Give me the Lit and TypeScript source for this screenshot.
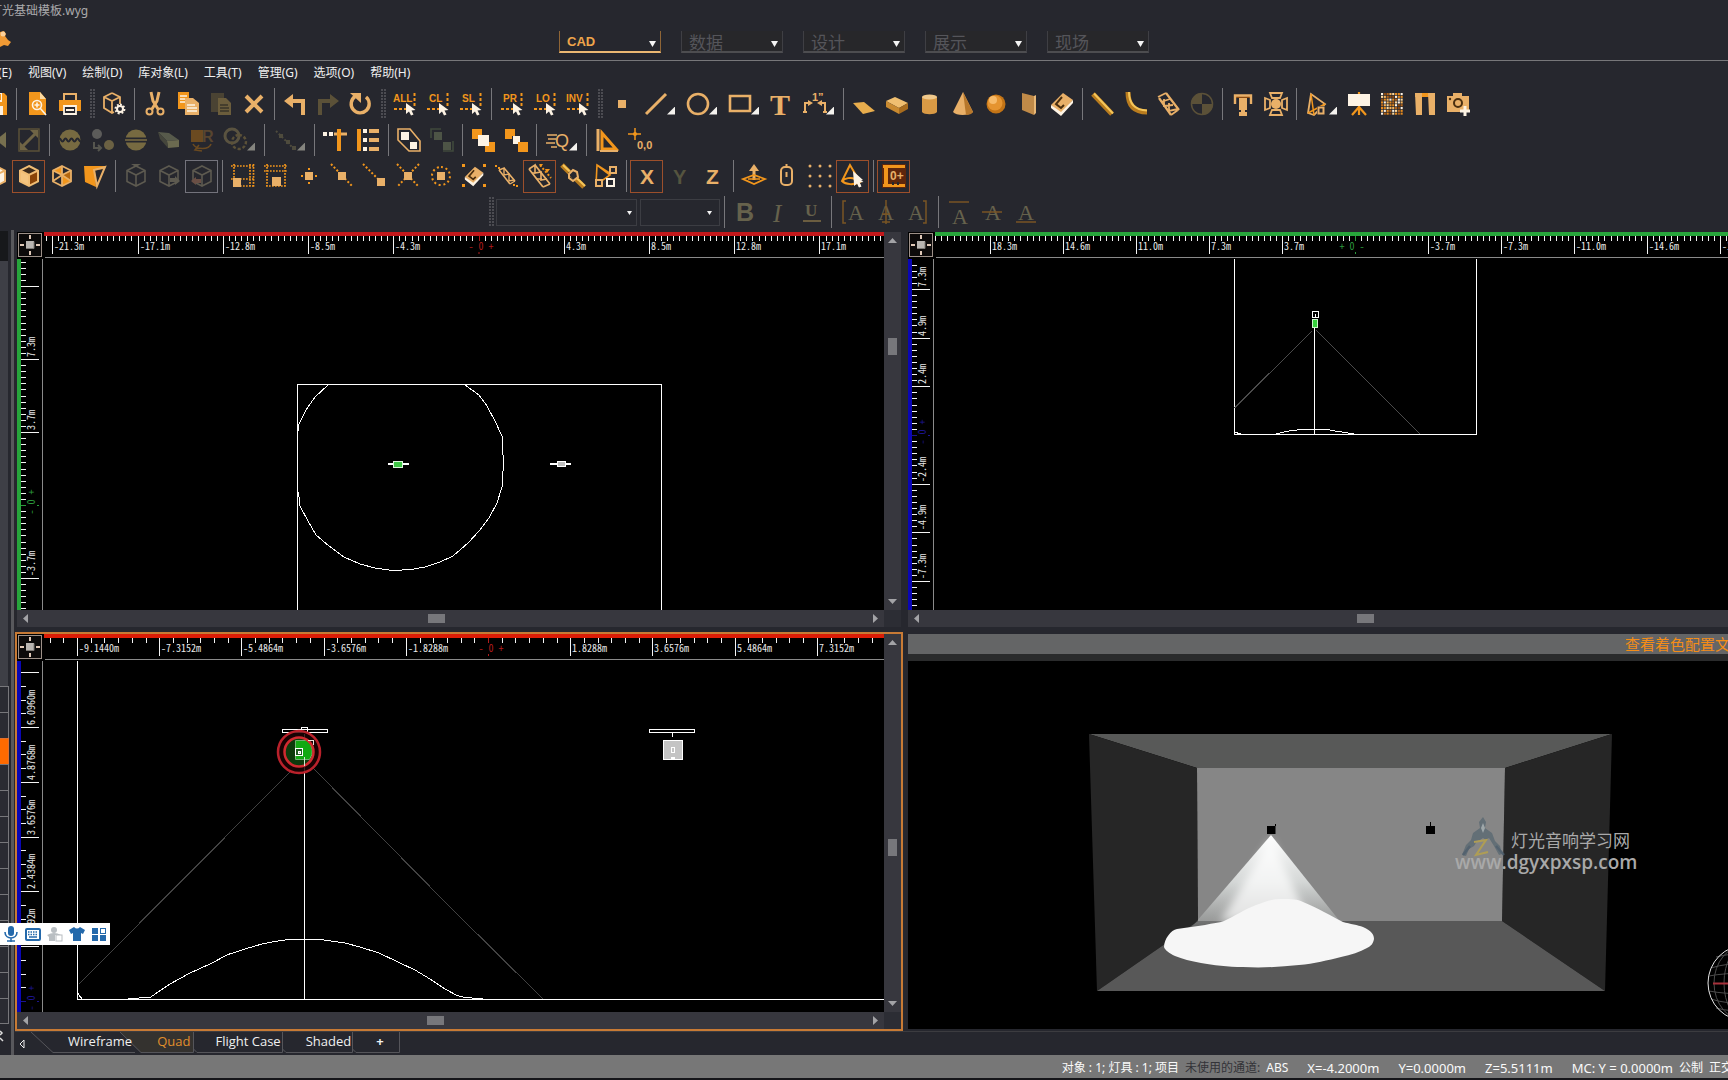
import { LitElement, html, svg, css, nothing } from "lit";
import { customElement, property } from "lit/decorators.js";
import { classMap } from "lit/directives/class-map.js";
import { styleMap } from "lit/directives/style-map.js";

/* ---------- icon drawing helpers (24 x 24 grid) ---------- */
const O = "#f2961c";
const L = "#e9b068";
const W = "#fdf3e4";
const D = "#5b5138";
const G = "#5d5a50";

const F = (d: string, c: string = L) => svg`<path d=${d} fill=${c}></path>`;
const S = (d: string, c: string = L, w: number = 2) =>
  svg`<path d=${d} fill="none" stroke=${c} stroke-width=${w}></path>`;
const DS = (d: string, c: string = O, w: number = 2, dash: string = "2 2") =>
  svg`<path d=${d} fill="none" stroke=${c} stroke-width=${w} stroke-dasharray=${dash}></path>`;
const C = (x: number, y: number, r: number, c: string = L, w: number = 0) =>
  w
    ? svg`<circle cx=${x} cy=${y} r=${r} fill="none" stroke=${c} stroke-width=${w}></circle>`
    : svg`<circle cx=${x} cy=${y} r=${r} fill=${c}></circle>`;
const T = (x: number, y: number, t: string, size: number, c: string, cls = "gb") =>
  svg`<text x=${x} y=${y} font-size=${size} fill=${c} class=${cls}>${t}</text>`;

const CURSOR = "M13 11l0 11 3-2.500 2 4 2.500-1-2-4 4-.5z";
const pick = (t: string) => [
  T(0, 10, t, 10, O),
  DS("M21.500 1v15", O, 2, "3 2"),
  DS("M1 17h13", O, 2, "3 2"),
  F(CURSOR, W),
];
const cube = (c: string, w = 2) => S("M12 2l9 4.500v11L12 22l-9-4.500v-11zM3 6.500l9 4.500 9-4.500M12 11v11", c, w);
const letterL = [
  F("M1 13L13 1l10 7-12 14z", L),
  F("M1 13l10 7 12-12v3L11 24 1 16z", W),
  S("M12 5l-6 7 5 4 3-3", "#4a2f10", 2),
];
const serifA = (x = 4) => T(x, 20, "A", 22, "#66624c", "gs");
const LED_TONES = [W, "#e58a1e", "#f7b55c", "#8c4a10", "#e58a1e", "#fbd9a0", "#b5651a"];
const ledDots = Array.from({ length: 64 }, (_, i) => {
  const x = i % 8;
  const y = Math.floor(i / 8);
  const tone = LED_TONES[(x * 3 + y * 5 + ((x * y) % 4)) % LED_TONES.length];
  return svg`<rect x=${1 + x * 2.8} y=${1 + y * 2.8} width="2.100" height="2.100" fill=${tone}></rect>`;
});

const ICONS: Record<string, unknown> = {
  save: [F("M1 1h19l3 3v19H1z", O), F("M4 1h14v9H4z", W), F("M4 14h15v9H4z", W), F("M14 2h3v6h-3z", O)],
  preview: [F("M4 0h11l6 7v16H4z", O), F("M15 0l6 7h-6z", "#fbd9a0"), C(12, 13, 4.5, W, 1.6), S("M12 10.500v5M9.500 13h5M15 16l6 7", W, 1.6)],
  print: [S("M6 9V2h12v7", L, 2), F("M1 8h22v11h-5v-4H6v4H1z", O), S("M6 14h12v8H6zM8 18h8", W, 1.8)],
  cubeGear: [S("M10 1l8 4v7M10 1L2 5v11l8 5 2-1M2 5l8 4 8-4M10 9v12", L, 1.8), C(18, 17, 3, W, 2), DS("M18 12.500a4.500 4.500 0 1 1-.1 0", W, 2, "1.800 1.700")],
  cut: [S("M8 0l2 9 5 8M16 0l-2 9-5 8", L, 3), C(6.5, 19.5, 3, L, 2), C(17.5, 19.5, 3, L, 2)],
  copy: [F("M2 0h11v17H2z", O), S("M4 4h7M4 7h6M4 10h5", W, 1.4), F("M9 6h8l6 5v12H9z", L), S("M11 13h8M11 16h10M11 19h10", W, 1.5)],
  paste: [F("M2 1h13v19H2z", "#4a4333"), F("M9 6h8l5 5v12H9z", "#6b5d3c"), S("M11 13h8M11 16h9M11 19h9", "#3a3528", 1.5)],
  remove: [S("M4 4l16 16M20 4L4 20", L, 4)],
  undo: [F("M1 9l9-7v5h12v16h-4V11h-8v5z", L)],
  redo: [F("M23 9l-9-7v5H2v16h4V11h8v5z", D)],
  refresh: [S("M17 5a9 9 0 1 1-11-.5", L, 3.4), F("M1 1h11v10z", L)],
  selAll: pick("ALL"),
  selClass: [T(3, 10, "CL", 10, O), ...pick("").slice(1)],
  selSymbol: [T(3, 10, "SL", 10, O), ...pick("").slice(1)],
  selProp: [T(3, 10, "PR", 10, O), ...pick("").slice(1)],
  selLocal: [T(3, 10, "LO", 10, O), ...pick("").slice(1)],
  selInvert: pick("INV"),
  point: [F("M8 8h8v8H8z", L)],
  line: [S("M2 22L22 2", L, 3)],
  circle: [C(12, 12, 10, L, 2.6)],
  rect: [S("M2 4h20v15H2z", L, 2.6)],
  text: [T(1, 23, "T", 30, L, "gsb")],
  dim: [T(9, 9, "1”", 11, L), S("M2 21v-10h6M22 21v-10h-6M0 20h4M20 20h4", L, 2), F("M5 8l5 3-5 3zM19 8l-5 3 5 3z", L)],
  plane: [F("M1 11l11-1 11 9-12 3z", "#e8ad4d")],
  box: [F("M1 9l9-4 13 6-9 5z", "#f0bf70"), F("M1 9v6l13 7v-6z", "#c98a30"), F("M14 16l9-5v6l-9 5z", "#a86c1e")],
  cylinder: [F("M4 5v15c2 3 13 3 15 0V5z", "#d99a45"), svg`<ellipse cx="11.500" cy="5" rx="7.500" ry="2.600" fill="#f0c98c"></ellipse>`],
  cone: [F("M12 0L2 20c3 4 16 4 20 0z", L), F("M12 0l3 23c3 0 6-1 7-3z", "#b8782c")],
  sphere: [C(12, 12, 9.5, "#c37416"), C(11, 11, 7.5, "#e59430"), C(9, 8, 4, "#f7bb6a")],
  slab: [F("M5 1l12 3v19L5 18z", "#c08a48"), F("M17 4l2-1v18l-2 2z", "#e8b878")],
  letter: letterL,
  pipe: [S("M2 2l19 20", "#b97c1e", 5), S("M3 1.500l19 20", "#f5c65a", 2)],
  bend: [S("M4 0c0 13 6 20 19 20", "#b97c1e", 5), S("M5 0c0 12 6 18 18 18.500", "#f5c65a", 2)],
  truss: [S("M2 6l12 17M9 1l13 17", L, 2.2), S("M1 5l8-4M4 10l9-3M7 7v7l9-1M12 11v8l9-2M14 23l7-5", L, 1.8)],
  target: [C(12, 12, 10.5, D, 1.5), F("M12 1a11 11 0 0 0-11 11h11zM12 23a11 11 0 0 0 11-11H12z", D)],
  par: [F("M5 3h14v3H5z", "#8a4a10"), S("M4 12V3.500h16V12", L, 2.4), F("M8 6h8v12H8z", L), F("M10 18h4v2h2v4H8v-4h2z", L)],
  moving: [C(12, 12, 5, L), S("M6 1h12l-2 5H8zM6 23h12l-2-5H8zM1 6v12l5-2V8zM23 6v12l-5-2V8z", L, 1.8)],
  lightTool: [S("M5 2L2 21l6 2 11-11z", L, 1.8), S("M5 2l3 21M2 21l17-9", O, 1.5), F("M11 14h8v9h-8z", "#26272e"), S("M12.500 15.500h5v6h-5z", L, 2)],
  screen: [F("M1 2h22v12H1z", W), S("M12 0v2M12 14v9M12 15l-7 8M12 15l7 8", O, 2.2)],
  ledWall: [ledDots],
  curtain: [F("M2 1h20v4H2z", O), F("M2 1h7v22H3zM15 1h7v22h-6z", L)],
  camera: [F("M1 4h6V1h9v3h7v16H1z", L), C(12, 11, 4, "#4a2f10", 2), C(4, 7, 1.2, "#4a2f10"), S("M19 14v10M14 19h10", W, 3)],

  mirrorH: [F("M2 4l10 8-10 8z", D), F("M22 4l-10 8 10 8z", "#77704f")],
  scale: [S("M2 1h20v22H2z", D, 1.5), S("M6 18L18 6", "#6f6445", 3), F("M21 2v8l-8-8zM3 22v-8l8 8z", "#6f6445")],
  wave: [C(12, 12, 10.5, "#776a41"), S("M0 12q1.500-3 3 0t3 0 3 0 3 0 3 0 3 0 3 0 3 0", "#26272e", 2)],
  array: [C(6, 6, 5, "#5c5c5a"), C(18, 17, 5, "#6b6143"), S("M3 14v6h7M7 17l3 3-3 3", "#56564f", 2)],
  splitC: [C(12, 12, 10.5, "#776a41"), S("M1 12h22", "#26272e", 5), S("M1 12h22", "#776a41", 1.6)],
  extrude: [F("M1 4l9 9 12-1-10-7z", "#575a4b"), F("M10 13l12-1v7l-11 1z", "#6b6a50"), F("M1 4l9 9 1 7-8-9z", "#45463c")],
  rotate: [F("M1 2h12v12H1z", "#6b4a20"), T(12, 14, "R", 16, "#58452f"), S("M3 16c3 6 16 6 18 0M9 17l-4 5 7 1", "#6b4a20", 1.6)],
  boolean: [C(8, 8, 7, "#5a5340", 3), DS("M15 7a7 7 0 1 1-.1 0", D, 2.4, "3 2")],
  pathDots: [DS("M2 3l18 18", "#4e4b3d", 2, "2 2"), F("M5 6h4v4H5zM12 12h4v4h-4zM18 18h4v4h-4z", "#4e4b3d")],
  alignT: [F("M0 4h4v4H0zM6 4h4v4H6z", W), S("M11 6h13", L, 3), S("M16 1v22", O, 4)],
  alignList: [F("M1 1h4v22H1z", O), F("M7 1h4v4H7zM7 10h4v4H7zM7 19h4v4H7z", W), F("M13 1h10v4H13zM13 10h10v4H13zM13 19h10v4H13z", L)],
  group: [S("M1 1h12l10 12v10H12L1 12z", L, 1.6), F("M4 4h8v8H4zM13 14h7v7h-7z", W)],
  ungroup: [S("M1 10V1h10M23 13v10H13", "#404a3c", 1.6), F("M4 4h8v8H4zM13 14h8v8h-8z", "#4d5446")],
  front: [F("M1 1h10v10H1zM14 14h10v10H14z", O), F("M7 7h11v11H7z", W)],
  back: [F("M1 1h10v10H1zM14 14h10v10H14z", O), F("M8 8h8v8H8z", "#26272e"), F("M9 8h7v8H9z", W), F("M14 14h10v10H14z", O)],
  quick: [T(9, 19, "Q", 18, L, "gn"), S("M1 7h10M2 11h8M0 15h9M5 19h6", L, 1.3)],
  square: [S("M3 1v22", L, 3), S("M7 5v16h14z", O, 3), F("M5 22h18v2H5z", L)],
  origin: [S("M7 0v12M0 6h13", O, 1.5), C(7, 6, 2, O), T(9, 21, "0,0", 11, L, "gb")],

  cubeLeft: [F("M12 2l9 4.500v11L12 22l-9-4.500v-11z", W), cube(L)],
  cubeSolid: [F("M12 11l9-4.500v11L12 22z", "#8a4408"), F("M12 2l9 4.500-9 4.500-9-4.500z", "#3a2a1c"), F("M3 6.500l9 4.500v11l-9-4.500z", "#f3c480"), cube("#f0bd74")],
  cubeWire: [F("M12 2v9l-9-5zM12 11l9 6-9 5z", O), F("M12 11l9-5v11z", "#b5670e"), cube(L, 1.8), S("M3 17l9-6 9 6M12 2v9", L, 1.8)],
  wedge: [F("M1 2h22l-2 3-9 1 1 17-11-5z", O), S("M11 6l11-3-8 19z", L, 2)],
  cubeDim1: [cube(G, 1.6), F("M7 0h10l-5 3z", G)],
  cubeDim2: [cube(G, 1.6), F("M13 14h5v-2l5 5-5 4v-3h-5z", G)],
  cubeDim3: [cube(G, 1.6), F("M11 15H6v-2l-5 4 5 4v-2h5z", "#6a4f45")],
  snapGrid1: [DS("M0 2h24M0 15h24M9 22h15M3 0v24M19 0v24M22.500 0v24", O, 1.7, "1.700 1.300"), F("M2 14h8v9H2z", L)],
  snapGrid2: [DS("M0 2h24M0 7h24M2 22h20M3 0v24M21 0v24", O, 1.7, "1.700 1.300"), F("M8 13h9v9H8z", L)],
  snapPoint: [F("M8 8h8v8H8z", L), F("M4 11h2v2H4zM18 11h2v2h-2zM11 4h2v2h-2zM11 18h2v2h-2z", O)],
  snapMid: [DS("M1 0l22 23", O, 2), F("M8 8h8v8H8z", L)],
  snapEnd: [DS("M0 0l18 18", O, 2), F("M14 14h8v8h-8z", L)],
  snapCross: [DS("M1 0l22 23M23 0L1 23", O, 2), F("M8 8h8v8H8z", L)],
  snapCentre: [DS("M12 3a9 9 0 1 1-.1 0", O, 2, "2 2.700"), F("M8 8h8v8H8z", L)],
  snapLetter: [svg`<g transform="translate(2 2) scale(.84)">${letterL}</g>`, F("M0 0h3v3H0zM21 0h3v3h-3zM0 20h3v3H0zM21 20h3v3h-3z", O)],
  snapTruss: [S("M4 6l11 14M9 4l11 13", L, 1.6), S("M4 6l5-2 0 7 5-1 0 7 5-1M15 20l5-3", L, 1.4), F("M0 1h2v2H0zM3 3h2v2H3zM18 20h2v2h-2zM21 21h2v2h-2z", O)],
  snapTruss2: [S("M1 5l14 18M7 1l15 19", L, 1.8), S("M1 5l6-4v8l6-1v8l6-1M15 23l7-3M4 9h4M9 15h5", L, 1.6), DS("M12 1l11 13", O, 2), F("M17 5h5l-3 4zM11 0h4l-2 3z", O)],
  snapPipe: [S("M1 1l22 22", "#b97c1e", 5), S("M2 1l22 21", "#f5c65a", 2), F("M7 9l5-4 6 6-5 6z", "#26272e"), S("M12 6l-4 4v4l4 3 5-4-1-5z", L, 2)],
  snapLight: [S("M3 1l-1 20 14-10zM3 1l14 9", O, 1.6), F("M1 15h8v8H1zM12 14h9v9h-9z", "#26272e"), S("M16 3h6v6h-6zM2 16h6v6H2z", L, 2), S("M13 15h7v7h-7z", W, 2)],
  axisX: [T(5, 20, "X", 21, L)],
  axisY: [T(5, 20, "Y", 20, "#55543f")],
  axisZ: [T(5, 20, "Z", 21, L)],
  lift: [F("M12 0l5 7H7z", L), S("M12 6v10", L, 3), S("M1 15l11-4 11 4-11 5z", O, 1.8), S("M6 15h12", O, 1.5)],
  mouse: [svg`<rect x="6" y="3" width="11" height="18" rx="4" fill="none" stroke=${L} stroke-width="2"></rect>`, S("M11.500 0v4M11.500 8v5", L, 2)],
  dots: [[2, 12, 22].map((y) => [2, 12, 22].map((x) => C(x, y, 1.5, L)))],
  coneSel: [S("M9 1L1 17c4 4 12 4 18 1zM1 17c3-3 9-4 13-2", O, 2), F(CURSOR, W), F("M12 7l1 13 3-2 2 5 2-1-2-5 4-1z", W)],
  rulerOn: [F("M0 0h24v24H0z", "#5e260c"), F("M1 1h22v3H1zM2 4h4v18H2zM1 20h22v3H1z", O), T(8, 16, "0+", 12, L), F("M10 18h2v3h-2zM15 18h2v3h-2z", "#26272e")],

  bold: [T(3, 21, "B", 25, "#66624c")],
  italic: [T(7, 22, "I", 25, "#66624c", "gsi")],
  underline: [T(6, 16, "U", 17, "#66624c", "gsb"), S("M4 21h18", "#6b5d40", 2)],
  aLeft: [serifA(8), S("M6 1H3v22h3", "#7a5524", 1.5)],
  aMid: [serifA(5), S("M13 0v24M9 14h8M9 22h8", "#7a5524", 1.5)],
  aRight: [serifA(2), S("M17 1h3v22h-3", "#7a5524", 1.5)],
  aTop: [T(5, 24, "A", 22, "#66624c", "gs"), S("M2 2h20", "#7a5524", 1.5)],
  aStrike: [serifA(5), S("M2 12h20", "#7a5524", 1.5)],
  aBottom: [serifA(5), S("M3 22h20", "#7a5524", 1.5)],
};

type Item = string;
/* "|" separator, ":" grip, "name>" drop-down, "name*" active, "name#" outlined */
const ROW1: Item[] = "save | preview print : cubeGear | cut copy paste remove | undo redo refresh : selAll selClass selSymbol | selProp selLocal selInvert : point line> circle> rect> text dim> | plane box cylinder cone sphere slab letter | pipe bend truss target | par moving | lightTool> screen ledWall curtain camera".split(" ");
const ROW2: Item[] = "mirrorH scale | wave array splitC extrude rotate boolean>- | pathDots>- | alignT alignList | group ungroup | front back | quick> | square origin".split(" ");
const ROW3: Item[] = "cubeLeft cubeSolid* cubeWire wedge | cubeDim1 cubeDim2 cubeDim3# | snapGrid1 snapGrid2 snapPoint snapMid snapEnd snapCross snapCentre snapLetter snapTruss snapTruss2* snapPipe snapLight | axisX* axisY axisZ | lift mouse dots coneSel* | rulerOn*".split(" ");
const ROW4: Item[] = "| bold italic underline | aLeft aMid aRight | aTop aStrike aBottom".split(" ");

@customElement("tool-strip")
export class ToolStrip extends LitElement {
  @property({ attribute: false }) items: Item[] = [];

  static styles = css`
    :host { display: flex; align-items: center; height: 36px; }
    .sep { flex: none; width: 8px; height: 32px; display: flex; justify-content: center; }
    .sep::before { content: ""; width: 1px; background: #77777b; }
    .grip {
      flex: none; width: 5px; height: 30px; margin: 0 2px 0 4px;
      background: radial-gradient(circle at 1px 1px, #4c4c52 1px, transparent 1px) 0 0 / 3px 3px;
    }
    button {
      flex: none; box-sizing: border-box; display: flex; align-items: center; justify-content: center;
      width: 33px; height: 33px; padding: 0; border: 1px solid transparent; background: none; position: relative;
    }
    .drop { width: 42px; padding-right: 7px; }
    .drop::after {
      content: ""; position: absolute; right: 4px; bottom: 5px; width: 8px; height: 8px;
      background: #f4f2ee; clip-path: polygon(100% 0, 100% 100%, 0 100%);
    }
    .dim::after { background: #85857f; }
    .active { border-color: #9c4f2b; }
    .outlined { border-color: #73737c; }
    svg { flex: none; width: 24px; height: 24px; overflow: visible; }
    .gb { font-family: "Liberation Sans", Arial, sans-serif; font-weight: 700; }
    .gn { font-family: "Liberation Sans", Arial, sans-serif; }
    .gs { font-family: "Liberation Serif", serif; }
    .gsb { font-family: "Liberation Serif", serif; font-weight: 700; }
    .gsi { font-family: "Liberation Serif", serif; font-style: italic; }
  `;

  render() {
    return this.items.map((item) => {
      if (item === "|") return html`<span class="sep"></span>`;
      if (item === ":") return html`<span class="grip"></span>`;
      const name = item.replace(/[^A-Za-z0-9]/g, "");
      const classes = {
        drop: item.includes(">"),
        dim: item.includes("-"),
        active: item.includes("*"),
        outlined: item.includes("#"),
      };
      return html`<button class=${classMap(classes)} aria-label=${name}>
        <svg viewBox="0 0 24 24">${ICONS[name]}</svg>
      </button>`;
    });
  }
}

/* ---------- scroll bars ---------- */
@customElement("scroll-bar")
export class ScrollBar extends LitElement {
  @property({ type: Number }) before = 1;
  @property({ type: Number }) after = 1;
  @property({ type: Boolean, reflect: true }) vertical = false;
  @property({ type: Boolean, attribute: "open-end" }) openEnd = false;

  static styles = css`
    :host { display: flex; align-items: center; background: #37373e; min-width: 0; min-height: 0; }
    :host([vertical]) { flex-direction: column; }
    button { flex: none; width: 17px; height: 17px; padding: 0; border: 0; background: none; display: flex; align-items: center; justify-content: center; }
    svg { width: 9px; height: 9px; }
    .thumb { flex: none; width: 17px; height: 9px; background: #77777b; }
    :host([vertical]) .thumb { width: 9px; height: 17px; }
  `;

  private arrow(d: string, label: string) {
    return html`<button aria-label=${label}><svg viewBox="0 0 9 9"><path d=${d} fill="#a3a3a6"></path></svg></button>`;
  }

  render() {
    const v = this.vertical;
    return html`
      ${v ? this.arrow("M4.500 2L9 7H0z", "Up") : this.arrow("M2 4.500L7 0v9z", "Left")}
      <span style=${styleMap({ flexGrow: String(this.before) })}></span>
      <span class="thumb"></span>
      <span style=${styleMap({ flexGrow: String(this.after) })}></span>
      ${this.openEnd ? nothing : v ? this.arrow("M4.500 7L9 2H0z", "Down") : this.arrow("M7 4.500L2 0v9z", "Right")}
    `;
  }
}

/* ---------- drawing views ---------- */
interface Axis {
  color: string;
  zero: number;
  step: number;
  div: number;
  mark: string;
  markAt: number;
  markColor: string;
  labels: Record<number, string>;
}

@customElement("cad-view")
export class CadView extends LitElement {
  @property({ attribute: false }) h!: Axis;
  @property({ attribute: false }) v!: Axis;
  @property({ attribute: false }) drawing: unknown;
  @property({ attribute: false }) scroll = [1, 1, 1, 1];
  @property({ type: Boolean, reflect: true }) active = false;
  @property({ type: Boolean, reflect: true }) cut = false;

  static styles = css`
    :host {
      display: grid; box-sizing: border-box; min-width: 0; min-height: 0; overflow: hidden;
      grid-template: 27px minmax(0, 1fr) 17px / 26px minmax(0, 1fr) 17px;
      border: 2px solid transparent; background: #000; background-clip: padding-box;
    }
    :host([active]) { border-color: #c77a35; }
    :host([cut]) { grid-template-columns: 26px minmax(0, 1fr); border-right: 0; }
    svg { display: block; width: 100%; height: 100%; overflow: hidden; min-width: 0; min-height: 0; }
    .hscroll { grid-column: 1 / 3; }
    .vscroll { grid-row: 1 / 3; grid-column: 3; }
    .corner { background: #2c2d34; }
    .label { font: 10px "Noto Sans Mono CJK SC", "Liberation Mono", monospace; fill: #e8e8e8; }
    .crisp { shape-rendering: crispEdges; }
  `;

  private axis(a: Axis, vertical: boolean) {
    const minor = a.step / a.div;
    const ticks: unknown[] = [];
    for (let n = -7 * a.div + 1; n <= 16 * a.div; n++) {
      const p = a.zero + n * minor;
      if (p < (vertical ? 3 : 1)) continue;
      const len = n !== 0 && n % a.div === 0 ? 22 : 9;
      const stroke = n === 0 ? a.markColor : "#f4f4f4";
      const at = Math.floor(p) + 0.5;
      ticks.push(
        vertical
          ? svg`<path d="M4 ${at}H${len}" stroke=${stroke}></path>`
          : svg`<path d="M${at} 4V${len}" stroke=${stroke}></path>`,
      );
    }
    const labels = Object.entries(a.labels).map(([k, t]) => {
      const p = Math.floor(a.zero + Number(k) * a.step);
      return vertical
        ? svg`<text class="label" transform="translate(18 ${p - 2}) rotate(-90)">${t}</text>`
        : svg`<text class="label" x=${p + 2} y="18">${t}</text>`;
    });
    return svg`
      ${vertical
        ? svg`<rect width="4" height="100%" fill=${a.color}></rect><path d="M25.500 0V2000" stroke="#8a8a8a"></path>`
        : svg`<rect x="1" width="100%" height="4" fill=${a.color}></rect><path d="M2 25.500H4000" stroke="#8a8a8a"></path>`}
      <g class="crisp">${ticks}</g>${labels}
      ${vertical
        ? svg`<text class="label" text-anchor="middle" style="fill:${a.markColor}" transform="translate(18 ${a.markAt}) rotate(-90)">${a.mark}</text>
            <path d="M20 ${a.zero}h2" stroke=${a.markColor}></path>`
        : svg`<text class="label" text-anchor="middle" style="fill:${a.markColor}" x=${a.markAt} y="18">${a.mark}</text>
            <path d="M${a.zero} 20v2" stroke=${a.markColor}></path>`}
    `;
  }

  render() {
    return html`
      <svg>
        <rect x="1.500" y="1.500" width="23" height="23" fill="#0c0a0a" stroke="#9d9088"></rect>
        <rect x="9" y="9" width="8" height="8" fill="#b9b5b1"></rect>
        <path d="M9 16.500h8v-7" stroke="#7d7975" fill="none"></path>
        <path d="M13 3v4M13 19v4M3 13h4M19 13h4" stroke="#e0c9b8" stroke-width="2"></path>
      </svg>
      <svg>${this.axis(this.h, false)}</svg>
      <svg>${this.axis(this.v, true)}</svg>
      <svg>${this.drawing}</svg>
      ${this.cut
        ? nothing
        : html`<scroll-bar class="vscroll" vertical .before=${this.scroll[2]} .after=${this.scroll[3]}></scroll-bar>`}
      <scroll-bar class="hscroll" .before=${this.scroll[0]} .after=${this.scroll[1]} ?open-end=${this.cut}></scroll-bar>
      ${this.cut ? nothing : html`<span class="corner"></span>`}
    `;
  }
}

const line = (d: string, c = "#fff", w = 1) =>
  svg`<path d=${d} fill="none" stroke=${c} stroke-width=${w} shape-rendering="crispEdges"></path>`;
const box = (x: number, y: number, w: number, h: number, fill: string, stroke = "none") =>
  svg`<rect x=${x} y=${y} width=${w} height=${h} fill=${fill} stroke=${stroke} shape-rendering="crispEdges"></rect>`;

const PLAN = svg`<g transform="translate(-43 -259)">
  ${line("M297.500 700V384.500H661.500V700")}
  ${line("M328 385L315 397L306 410L299 424L298.500 431M298.500 492L300 506L308 521L316 535L329 546L344 557L360 564L375 568L393 570.500L411 569.500L425 567L440 562L453 556L468 543L480 530L489 518L497 503L502 487L503.500 464L502 436L495 421L487 406L479 395L465 385")}
  ${line("M388 464H409M550 464H571", "#fff", 2)}
  ${box(393.5, 461.5, 9, 6, "#3ec545", "#d9f7da")}
  ${box(557.5, 461.5, 8, 5, "#bdbdbd", "#fff")}
</g>`;

const SIDE = svg`<g transform="translate(-934 -259)">
  ${line("M1234.500 200V434.500H1476.500V200")}
  ${line("M1312 331L1234.500 408M1316 330L1420 434", "#4b4b4b")}
  ${line("M1314.500 328V434")}
  ${line("M1234 432l7 2M1276 434L1282 432.500L1289 431L1301 429.500H1327L1335 431L1345 432.500L1354 434")}
  ${box(1312.5, 311.5, 6, 6, "#000", "#fff")}${line("M1315.500 314V317")}
  ${box(1312.5, 319.5, 5, 8, "#35d13c", "#c9f5cb")}
</g>`;

const FRONT = svg`<g transform="translate(-43 -661)">
  ${line("M77.500 600V999.500H2000")}
  ${line("M77.500 993L82 999M128 998.500L150 997.500L170 984L190 973L210 964L228 954.500L245 949L262 944L275 941.500L288 939.500H320L335 941.500L345 943L360 947L379 953L400 963L415 970L430 979L445 989L457 995.500L463 997L472 998L483 999")}
  ${line("M291 771L79 984M313 768L450 907L543 999", "#424242")}
  ${line("M304.500 734V999")}
  ${box(282.5, 729.5, 45, 3, "#000", "#fff")}${box(301.5, 727.5, 6, 5, "none", "#fff")}
  <circle cx="299" cy="752" r="21" fill="#1c0204" fill-opacity=".85" stroke="#b9212b" stroke-width="2.500"></circle>
  <circle cx="299" cy="752" r="15" fill="#0d3a0c"></circle>
  <path d="M295.500 740.500h12a14 14 0 0 1 2 19h-14z" fill="#12a912" stroke="#6fb06f"></path>
  <circle cx="299" cy="752" r="14.500" fill="none" stroke="#d02a30" stroke-width="2.500"></circle>
  ${line("M308 740.500H313.500V745", "#e6e0da")}
  <path d="M304.500 757v9" stroke="#cfe8cf"></path>
  ${box(295.5, 748.5, 7, 7, "#1f5a1f", "#fff")}${box(298.5, 751.5, 2, 2, "#9ab09a", "#fff")}
  ${box(649.5, 729.5, 45, 3, "#000", "#fff")}${line("M672.500 733V737")}
  ${box(663.5, 740.5, 19, 19, "#c4c4c4", "#fff")}${box(671.5, 747.5, 3, 5, "#c4c4c4", "#fff")}${box(671, 757, 4, 3, "#fff")}
</g>`;

const SCENE = svg`<defs>
    <linearGradient id="beam" x1="0" x2="0" y1="0" y2="1">
      <stop offset="0" stop-color="#fff"></stop><stop offset=".5" stop-color="#f2f6f5" stop-opacity=".72"></stop>
      <stop offset="1" stop-color="#e6ecea" stop-opacity=".08"></stop>
    </linearGradient>
    <filter id="soft" x="-10%" y="-10%" width="120%" height="120%"><feGaussianBlur stdDeviation="4"></feGaussianBlur></filter>
  </defs>
  <g transform="translate(-908 -661)">
    <path d="M1089 734H1612L1505 768H1197z" fill="#585958"></path>
    <path d="M1089 734L1197 768L1198 921L1097 991z" fill="#262626"></path>
    <path d="M1612 734L1505 768L1502 921L1605 991z" fill="#262626"></path>
    <path d="M1197 768H1505L1502 921H1198z" fill="#868686"></path>
    <path d="M1198 921H1502L1605 991H1097z" fill="#585858"></path>
    <path d="M1271 835L1190 929H1346z" fill="url(#beam)"></path>
    <path d="M1271 839L1220 922L1305 912z" fill="#fff" fill-opacity=".7" filter="url(#soft)"></path>
    <path d="M1164 947C1164 939 1171 930 1177 929C1186 928 1196 926 1205 925C1213 923 1219 923 1224 921C1235 916 1245 909 1256 905C1266 901 1273 899 1281 899C1292 899 1297 899 1303 902C1311 905 1318 909 1324 912C1331 915 1336 919 1343 922C1350 924 1358 925 1363 927C1372 931 1374 935 1374 939C1373 944 1371 946 1367 948C1360 952 1351 955 1341 957C1328 960 1314 964 1299 965C1280 967 1262 968 1243 967C1228 967 1213 965 1201 963C1191 961 1182 959 1175 956C1169 953 1165 950 1164 947z" fill="#f6f6f6"></path>
    <path d="M1267 826h8v-2h1v2h-.5v8h-8.500zM1426 826h4v-4h1v4h4v8h-9z" fill="#000"></path>
    <g opacity=".85">
      <path d="M1483 817l3 5-1 6 7 5 3 8 5 5 2 8-3 1-5-9-5-8-3 2-3-2-3 2-3 1-3 5-5 3-3 7-4-1 4-10 5-5 2-7 7-5-1-6z" fill="#5d6b74"></path>
      <path d="M1483 823l2 5-2 5-2-5z" fill="#a3adb0"></path>
      <path d="M1470 846l-7 9M1496 846l8 9" stroke="#4b5c6b" stroke-width="2.500"></path>
      <path d="M1474 842l12-2-10 15 12-3" fill="none" stroke="#b7a24c" stroke-width="2"></path>
    </g>
    <text class="mark" x="1511" y="847">灯光音响学习网</text>
    <text class="mark url" x="1455" y="869">www.dgyxpxsp.com</text>
    <g fill="none">
      <g stroke="#4c4c4c">
        <ellipse cx="1746" cy="983" rx="32" ry="38"></ellipse><ellipse cx="1746" cy="983" rx="22" ry="38"></ellipse>
        <path d="M1711 968q15-5 40-5M1709 976q15-3 40-3M1709 991q15 3 40 3M1711 999q15 5 40 5M1716 957q15-4 40-4M1716 1008q15 4 40 4"></path>
      </g>
      <circle cx="1746" cy="983" r="38" stroke="#e4e4e4"></circle>
      <path d="M1713 983.500h40" stroke="#a8313b" stroke-width="2"></path>
    </g>
  </g>`;

const RED = "#c3181b";
const GREEN = "#27a53b";
const BLUE = "#0a06b4";

const VIEWS = {
  plan: {
    h: { color: RED, zero: 436, step: 85.24, div: 14, mark: "- 0 +", markAt: 438, markColor: "#b01c1c",
      labels: { [-5]: "-21.3m", [-4]: "-17.1m", [-3]: "-12.8m", [-2]: "-8.5m", [-1]: "-4.3m", 1: "4.3m", 2: "8.5m", 3: "12.8m", 4: "17.1m" } },
    v: { color: GREEN, zero: 246.5, step: 73, div: 12, mark: "- 0 +", markAt: 243, markColor: "#2b9a3c",
      labels: { [-2]: "7.3m", [-1]: "3.7m", 1: "-3.7m" } },
    scroll: [394, 422, 89, 238],
  },
  side: {
    h: { color: GREEN, zero: 421.5, step: 73, div: 12, mark: "+ 0 -", markAt: 418, markColor: "#2b9a3c",
      labels: { [-5]: "18.3m", [-4]: "14.6m", [-3]: "11.0m", [-2]: "7.3m", [-1]: "3.7m", 1: "-3.7m", 2: "-7.3m", 3: "-11.0m", 4: "-14.6m", 5: "-18.3m" } },
    v: { color: BLUE, zero: 176.5, step: 48.67, div: 8, mark: "- 0 +", markAt: 173, markColor: "#1c148f",
      labels: { [-3]: "7.3m", [-2]: "4.9m", [-1]: "2.4m", 1: "-2.4m", 2: "-4.9m", 3: "-7.3m" } },
    scroll: [432, 354, 1, 1],
  },
  front: {
    h: { color: "#dc1c06", zero: 445.5, step: 82.2, div: 6, mark: "- 0 +", markAt: 448, markColor: "#b41c1c",
      labels: { [-5]: "-9.1440m", [-4]: "-7.3152m", [-3]: "-5.4864m", [-2]: "-3.6576m", [-1]: "-1.8288m", 1: "1.8288m", 2: "3.6576m", 3: "5.4864m", 4: "7.3152m" } },
    v: { color: BLUE, zero: 340.5, step: 54.8, div: 4, mark: "- 0 +", markAt: 337, markColor: "#1c148f",
      labels: { [-5]: "6.0960m", [-4]: "4.8768m", [-3]: "3.6576m", [-2]: "2.4384m", [-1]: "1.2192m" } },
    scroll: [393, 423, 188, 139],
  },
};

/* ---------- application ---------- */
@customElement("app-root")
export class AppRoot extends LitElement {
  static styles = css`
    :host {
      display: flex; flex-direction: column; height: 100vh; overflow: hidden;
      background: #26272e; color: #f0f0f0;
      font: 12px/16px "Noto Sans", "Noto Sans CJK SC", sans-serif;
    }
    .title { height: 22px; line-height: 22px; margin-left: -10px; color: #aaaaac; }
    .modes { position: relative; display: flex; justify-content: center; align-items: flex-end; gap: 20px; height: 38px; padding-right: 20px; border-bottom: 1px solid #77777a; }
    .logo { position: absolute; left: 0; top: 7px; width: 11px; height: 18px; }
    .mode { position: relative; width: 102px; height: 22px; margin-bottom: 7px; }
    .mode select {
      box-sizing: border-box; width: 100%; height: 100%; padding: 1px 20px 0 7px; appearance: none;
      border: 1px solid #3f3f44; border-top: 0; border-bottom: 2px solid #4d4d50; border-radius: 0;
      background: #27272a; color: #55555a; font: 17px/20px "Noto Sans CJK SC", sans-serif;
    }
    .mode svg { position: absolute; right: 5px; top: 10px; width: 7px; height: 6px; pointer-events: none; }
    .mode.current select { padding-top: 2px; border-color: #8f6536; border-bottom-color: #ecb873; background: #26272e; color: #efa54b; font: 700 13px/18px "Liberation Sans", sans-serif; }
    .menu { box-sizing: border-box; display: flex; align-items: center; gap: 16px; height: 25px; margin-left: -26px; padding-bottom: 2px; }
    .menu button { padding: 0; border: 0; background: none; color: inherit; font: inherit; white-space: nowrap; }
    .bars { flex: none; }
    .shift { margin-left: -21px; }
    .format { display: flex; align-items: center; padding-left: 485px; }
    .format select { box-sizing: border-box; width: 141px; height: 27px; margin-right: 3px; appearance: none; border: 1px solid #3c3d43; border-radius: 0; background: #26272e; }
    .format .size { width: 80px; margin-right: 0; }
    .combo { position: relative; display: flex; }
    .combo svg { position: absolute; right: 8px; top: 12px; width: 5px; height: 4px; pointer-events: none; }
    .main { position: relative; flex: 1; min-height: 0; display: flex; }
    .side { flex: none; box-sizing: border-box; width: 15px; display: flex; flex-direction: column; padding-top: 1px; border-right: 1px solid #28272d; background: linear-gradient(90deg, transparent 11px, #58585c 11px); }
    .side .head { height: 30px; width: 8px; background: #17181b; }
    .side .panel { flex: 1; width: 8px; background: #3e3f46; }
    .cell { box-sizing: border-box; width: 9px; height: 26px; border: 1px solid #77777b; border-width: 1px 1px 0 0; background: #2a2b32; }
    .cell:last-of-type { border-bottom-width: 1px; }
    .cell.on { background: #ff6a00; border-color: #e07030; }
    .side .foot { height: 31px; }
    .side .foot svg { display: block; width: 6px; height: 12px; margin-top: 6px; }
    .work { flex: 1; min-width: 0; display: flex; flex-direction: column; }
    .quad { flex: 1; min-height: 0; display: grid; gap: 3px; grid-template: minmax(0, 1fr) minmax(0, 1fr) / minmax(0, 888fr) minmax(0, 822fr); }
    .render { display: flex; flex-direction: column; min-width: 0; min-height: 0; padding: 2px 0 2px 2px; overflow: hidden; }
    .bar { flex: none; display: flex; justify-content: flex-end; height: 20px; background: #646566; border-bottom: 7px solid #2a2b2c; overflow: hidden; }
    .bar a { flex: none; margin-right: -17px; color: #f58d17; font: 15px/20px "Noto Sans CJK SC", sans-serif; text-decoration: none; white-space: nowrap; }
    .scene { flex: 1; min-height: 0; width: 100%; background: #000; overflow: hidden; }
    .mark { font: 17px "Noto Sans CJK SC", sans-serif; fill: #a9a9a9; }
    .url { font: 600 19px "Open Sans", "Noto Sans", sans-serif; }
    .tabs { position: relative; flex: none; box-sizing: border-box; display: flex; height: 24px; border-top: 1px solid #3c3c40; }
    .tabs > svg { position: absolute; left: 0; top: 0; width: 400px; height: 23px; }
    .tabs button { position: relative; padding: 0 6px 0 19px; border: 0; background: none; color: #f0f0f0; font: 13px/18px "Open Sans", "Noto Sans", sans-serif; height: 18px; white-space: nowrap; }
    .tabs .prev { width: 15px; height: 22px; padding: 0; }
    .tabs .prev svg { display: block; width: 6px; height: 10px; margin: 2px 0 0 4px; }
    .tabs .first { padding: 0 6px 0 38px; }
    .tabs .on { color: #e08f2c; }
    .tabs .add { padding: 0 18px 0 19px; font-weight: 700; }
    .ime { position: absolute; left: 0; bottom: 110px; display: flex; align-items: center; height: 22px; background: #fff; }
    .ime button { width: 22px; height: 22px; padding: 0; border: 0; background: none; }
    .ime svg { display: block; width: 16px; height: 16px; margin: 0 3px; }
    .status { flex: none; display: flex; justify-content: flex-end; gap: 6px; height: 23px; line-height: 26px; margin-right: -5px; background: #777; border-bottom: 2px solid #16161a; color: #fafafa; white-space: nowrap; }
    .status .dark { color: #333338; }
    .status .coord { margin-left: 13px; font-size: 13px; }
  `;

  private tri(w: number, h: number) {
    return html`<svg viewBox="0 0 ${w} ${h}"><path d="M0 0H${w}L${w / 2} ${h}z" fill="#f4f4f4"></path></svg>`;
  }

  private view(v: (typeof VIEWS)["plan"], drawing: unknown, active = false, cut = false) {
    return html`<cad-view .h=${v.h} .v=${v.v} .scroll=${v.scroll} .drawing=${drawing} ?active=${active} ?cut=${cut}></cad-view>`;
  }

  render() {
    const blue = "#2469ab";
    return html`
      <div class="title">灯光基础模板.wyg</div>
      <div class="modes">
        <svg class="logo" viewBox="0 0 11 18">
          <path d="M0 3l4-1 2 3-1 2 3 4 3 2-3 4-4-1-4 2z" fill="#f09a34"></path><circle cx="3" cy="5" r="2.500" fill="#fbd09a"></circle>
        </svg>
        ${["CAD", "数据", "设计", "展示", "现场"].map(
          (m, i) => html`<span class=${classMap({ mode: true, current: i === 0 })}>
            <select aria-label=${m}><option>${m}</option></select>${this.tri(7, 6)}
          </span>`,
        )}
      </div>
      <nav class="menu">
        ${["编辑(E)", "视图(V)", "绘制(D)", "库对象(L)", "工具(T)", "管理(G)", "选项(O)", "帮助(H)"].map(
          (m) => html`<button>${m}</button>`,
        )}
      </nav>
      <div class="bars">
        <tool-strip class="shift" .items=${ROW1}></tool-strip>
        <tool-strip class="shift" .items=${ROW2}></tool-strip>
        <tool-strip class="shift" .items=${ROW3}></tool-strip>
        <div class="format">
          <tool-strip .items=${[":"]}></tool-strip>
          <span class="combo"><select aria-label="Font"></select>${this.tri(5, 4)}</span>
          <span class="combo"><select class="size" aria-label="Size"></select>${this.tri(5, 4)}</span>
          <tool-strip .items=${ROW4}></tool-strip>
        </div>
      </div>
      <div class="main">
        <aside class="side">
          <div class="head"></div>
          <div class="panel"></div>
          ${Array.from({ length: 13 }, (_, i) => html`<div class=${classMap({ cell: true, on: i === 2 })}></div>`)}
          <footer class="foot"><svg viewBox="0 0 6 12"><path d="M0 1l2 2-2 2M0 8l3 3" fill="none" stroke="#ddd" stroke-width="1.500"></path></svg></footer>
        </aside>
        <div class="work">
          <div class="quad">
            ${this.view(VIEWS.plan, PLAN)} ${this.view(VIEWS.side, SIDE, false, true)} ${this.view(VIEWS.front, FRONT, true)}
            <section class="render">
              <div class="bar"><a href="#profile">查看着色配置文件</a></div>
              <svg class="scene">${SCENE}</svg>
            </section>
          </div>
          <nav class="tabs">
            <svg viewBox="0 0 400 23">
              <path d="M105 0H178V20H125z" fill="#34322f"></path>
              <path d="M16 0L38 20.500H120M105 0L126 20.500H178.500V0M178.500 17L182 20.500H267.500V0M267.500 17L271 20.500H337.500V0M337.500 17L341 20.500H384.500V0" fill="none" stroke="#55555a"></path>
            </svg>
            <button class="prev" aria-label="Previous"><svg viewBox="0 0 6 10"><path d="M5 1v8L1 5z" fill="none" stroke="#eee"></path></svg></button>
            <button class="first">Wireframe</button>
            <button class="on">Quad</button>
            <button>Flight Case</button>
            <button>Shaded</button>
            <button class="add">+</button>
          </nav>
        </div>
        <div class="ime">
          <button aria-label="Voice"><svg viewBox="0 0 16 16"><rect x="5" y="0" width="6" height="10" rx="3" fill=${blue}></rect><path d="M2 6c0 8 12 8 12 0M8 12v4M4 15h8" fill="none" stroke=${blue} stroke-width="1.600"></path></svg></button>
          <button aria-label="Keyboard"><svg viewBox="0 0 16 16"><rect x="1" y="3" width="14" height="11" rx="1" fill="none" stroke=${blue} stroke-width="2"></rect><path d="M3 6h10M3 8.500h10" stroke=${blue} stroke-width="1.500" stroke-dasharray="1.500 1"></path><path d="M4 11h8" stroke=${blue} stroke-width="1.500"></path></svg></button>
          <button aria-label="Account"><svg viewBox="0 0 16 16"><circle cx="7" cy="4" r="3" fill="#b9bec2"></circle><path d="M0 9q7-4 14 0H8v6H2v-4z" fill="#b9bec2"></path><rect x="9" y="9" width="6" height="6" fill="#fff" stroke="#b9bec2"></rect></svg></button>
          <button aria-label="Skin"><svg viewBox="0 0 16 16"><path d="M5 1q3 3 6 0l5 3-2 4-2-1v8H4V7L2 8 0 4z" fill=${blue}></path></svg></button>
          <button aria-label="Tools"><svg viewBox="0 0 16 16"><path d="M1 2h6v6H1zM1 9h6v6H1zM9 9h6v6H9z" fill=${blue}></path><rect x="9.500" y="2.500" width="5" height="5" fill="none" stroke=${blue}></rect></svg></button>
        </div>
      </div>
      <footer class="status">
        <span>对象 : 1; 灯具 : 1; 项目</span><span class="dark">未使用的通道:</span><span>ABS</span>
        <span class="coord">X=-4.2000m</span><span class="coord">Y=0.0000m</span><span class="coord">Z=5.5111m</span>
        <span class="coord">MC: Y = 0.0000m</span><span>公制</span><span>正交</span>
      </footer>
    `;
  }
}
